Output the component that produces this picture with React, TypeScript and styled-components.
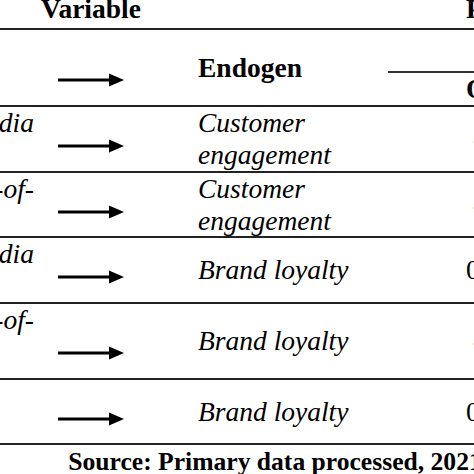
import React from 'react';
import styled, { createGlobalStyle } from 'styled-components';

const GlobalStyle = createGlobalStyle`
  html, body {
    margin: 0;
    padding: 0;
    background: #ffffff;
    overflow: hidden;
  }
  body {
    font-family: 'Liberation Serif', 'Times New Roman', serif;
    color: #000;
  }
`;

const rows = [
  { exo: ['Social media', 'marketing'], endo: ['Customer', 'engagement'], value: '-0.112', height: 64 },
  { exo: ['Word-of-', 'mouth'], endo: ['Customer', 'engagement'], value: '-0.087', height: 63 },
  { exo: ['Social media', 'marketing'], endo: ['Brand loyalty'], value: '0.214', height: 64 },
  { exo: ['Word-of-', 'mouth'], endo: ['Brand loyalty'], value: '-0.036', height: 74 },
  { exo: ['', 'Customer'], endo: ['Brand loyalty'], value: '0.415', height: 63 },
];

const Arrow: React.FC = () => (
  <svg width="66" height="16" viewBox="0 0 66 16">
    <rect x="0" y="6.5" width="54" height="3" fill="#000" />
    <polygon points="51,1.5 66,8 51,14.5" fill="#000" />
  </svg>
);

export default function App() {
  return (
    <Page>
      <GlobalStyle />
      <Table>
        <TopHeader>
          <HeadText $span={3} $center>Variable</HeadText>
          <HeadText $indent>Path Coefficient</HeadText>
        </TopHeader>

        <Row $height={75}>
          <ExoCell />
          <ArrowCell>
            <Arrow />
          </ArrowCell>
          <EndoCell>
            <BoldLabel>Endogen</BoldLabel>
          </EndoCell>
          <GroupCell>
            <GroupTitle />
            <SubHead>Original Sample (O)</SubHead>
          </GroupCell>
        </Row>

        {rows.map((r, i) => (
          <Row key={i} $height={r.height}>
            <ExoCell>
              <ExoLine $right>{r.exo[0] || '\u00a0'}</ExoLine>
              <ExoLine>{r.exo[1]}</ExoLine>
            </ExoCell>
            <ArrowCell>
              <Arrow />
            </ArrowCell>
            <EndoCell>
              {r.endo.map((line) => (
                <ItalicLine key={line}>{line}</ItalicLine>
              ))}
            </EndoCell>
            <ValueCell $neg={r.value.startsWith('-')}>{r.value}</ValueCell>
          </Row>
        ))}

        <Source>Source: Primary data processed, 2021</Source>
      </Table>
    </Page>
  );
}

const Page = styled.div`
  width: 474px;
  height: 474px;
  overflow: hidden;
`;

const Table = styled.div`
  width: 962px;
  margin-left: -206px;
  margin-top: -7px;
  display: flex;
  flex-direction: column;
  font-size: 27.5px;
  line-height: 32px;
`;

const TopHeader = styled.div`
  display: grid;
  grid-template-columns: 246px 150px 198px 368px;
  height: 35px;
  border-bottom: 2px solid #222;
`;

const HeadText = styled.div<{ $span?: number; $center?: boolean; $indent?: boolean }>`
  grid-column: span ${(p) => p.$span ?? 1};
  font-weight: 700;
  text-align: ${(p) => (p.$center ? 'center' : 'left')};
  padding-left: ${(p) => (p.$indent ? '78px' : '0')};
  white-space: nowrap;
`;

const Row = styled.div<{ $height: number }>`
  display: grid;
  grid-template-columns: 246px 150px 198px 368px;
  height: ${(p) => p.$height}px;
  border-bottom: 2px solid #222;
`;

const ExoCell = styled.div`
  display: flex;
  flex-direction: column;
  padding-right: 6px;
  font-style: italic;
  white-space: nowrap;
`;

const ExoLine = styled.span<{ $right?: boolean }>`
  text-align: ${(p) => (p.$right ? 'right' : 'left')};
`;

const ArrowCell = styled.div`
  display: flex;
  align-items: flex-end;
  padding-left: 18px;
  padding-bottom: 17px;
`;

const EndoCell = styled.div`
  display: flex;
  flex-direction: column;
  justify-content: center;
  padding-left: 8px;
  white-space: nowrap;
`;

const BoldLabel = styled.span`
  font-weight: 700;
`;

const ItalicLine = styled.span`
  font-style: italic;
`;

const GroupCell = styled.div`
  display: flex;
  flex-direction: column;
`;

const GroupTitle = styled.div`
  height: 41px;
  border-bottom: 2px solid #333;
`;

const SubHead = styled.div`
  padding-left: 78px;
  font-weight: 700;
  white-space: nowrap;
`;

const ValueCell = styled.div<{ $neg?: boolean }>`
  display: flex;
  align-items: center;
  padding-left: ${(p) => (p.$neg ? '85px' : '78px')};
  white-space: nowrap;
`;

const Source = styled.div`
  padding-top: 2px;
  text-align: center;
  font-weight: 700;
  font-size: 25.6px;
  line-height: 30px;
  white-space: nowrap;
`;
